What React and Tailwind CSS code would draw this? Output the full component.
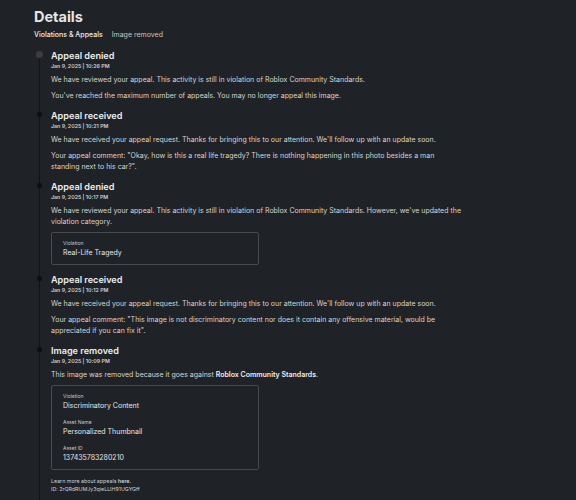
import React from "react";

function Item({ first, last, title, date, children }) {
  return (
    <div className="flex">
      <div className="w-[17px] shrink-0 flex flex-col items-start">
        {first ? (
          <div className="w-[7px] h-[7px] rounded-full bg-[#3a3d41] ml-[2px] mt-[2px] shrink-0" />
        ) : (
          <>
            <div className="w-px h-[3px] bg-[#131416] ml-[5px] shrink-0" />
            <div className="w-[5px] h-[5px] rounded-full bg-[#0e0f11] ml-[3px] shrink-0" />
          </>
        )}
        <div className="w-px bg-[#131416] ml-[5px] flex-1" />
      </div>
      <div className={`flex-1 ${last ? "" : "pb-[8px]"}`}>
        <div className="text-[9.1px] leading-[13px] font-semibold text-[#eeeeee]">{title}</div>
        <div className="text-[5.3px] leading-[8px] font-semibold text-[#cfcfcf]">{date}</div>
        <div className="mt-[3.5px] flex flex-col gap-[5.5px] text-[7px] leading-[11px] text-[#d8d6d2] w-[412px]">
          {children}
        </div>
      </div>
    </div>
  );
}

function Card({ rows }) {
  return (
    <div className="w-[208px] border border-[#46494e] rounded-[2px] px-[11px] pt-[6px] pb-[5px] flex flex-col gap-[6px]">
      {rows.map(([label, value]) => (
        <div key={label}>
          <div className="text-[5px] leading-[8px] text-[#cacaca]">{label}</div>
          <div className="text-[7px] leading-[12px] text-[#e6e6e6]">{value}</div>
        </div>
      ))}
    </div>
  );
}

export default function App() {
  return (
    <div
      className="w-[576px] h-[500px] overflow-hidden bg-[#1f2226] pl-[34px] pt-[6px]"
      style={{ fontFamily: 'Inter, "Liberation Sans", Arial, sans-serif' }}
    >
      <h1 className="text-[14.5px] leading-[22px] font-bold text-[#e6e6e6]">Details</h1>
      <div className="flex gap-[9px] text-[7px] leading-[12px] mt-[1px]">
        <span className="text-[#eeeeee] font-medium">Violations &amp; Appeals</span>
        <span className="text-[#c8c6c1]">Image removed</span>
      </div>
      <div className="mt-[8px] flex flex-col">
        <Item first title="Appeal denied" date="Jan 9, 2025 | 10:26 PM">
          <p>We have reviewed your appeal. This activity is still in violation of Roblox Community Standards.</p>
          <p>You've reached the maximum number of appeals. You may no longer appeal this image.</p>
        </Item>
        <Item title="Appeal received" date="Jan 9, 2025 | 10:21 PM">
          <p>We have received your appeal request. Thanks for bringing this to our attention. We'll follow up with an update soon.</p>
          <p>Your appeal comment: "Okay, how is this a real life tragedy? There is nothing happening in this photo besides a man standing next to his car?".</p>
        </Item>
        <Item title="Appeal denied" date="Jan 9, 2025 | 10:17 PM">
          <p>We have reviewed your appeal. This activity is still in violation of Roblox Community Standards. However, we've updated the violation category.</p>
          <Card rows={[["Violation", "Real-Life Tragedy"]]} />
        </Item>
        <Item title="Appeal received" date="Jan 9, 2025 | 10:12 PM">
          <p>We have received your appeal request. Thanks for bringing this to our attention. We'll follow up with an update soon.</p>
          <p>Your appeal comment: "This image is not discriminatory content nor does it contain any offensive material, would be appreciated if you can fix it".</p>
        </Item>
        <Item title="Image removed" date="Jan 9, 2025 | 10:09 PM" last>
          <p>
            This image was removed because it goes against{" "}
            <span className="font-semibold text-[#eeeeee]">Roblox Community Standards</span>.
          </p>
          <Card
            rows={[
              ["Violation", "Discriminatory Content"],
              ["Asset Name", "Personalized Thumbnail"],
              ["Asset ID", "137435783280210"],
            ]}
          />
          <div className="mt-[1px] text-[5.3px] leading-[8px] text-[#d2d2d2] pb-[20px]">
            <div>
              Learn more about appeals <span className="font-semibold">here</span>.
            </div>
            <div>ID: 2rQRdRUMJy3qieLLIH91UGYGff</div>
          </div>
        </Item>
      </div>
    </div>
  );
}
